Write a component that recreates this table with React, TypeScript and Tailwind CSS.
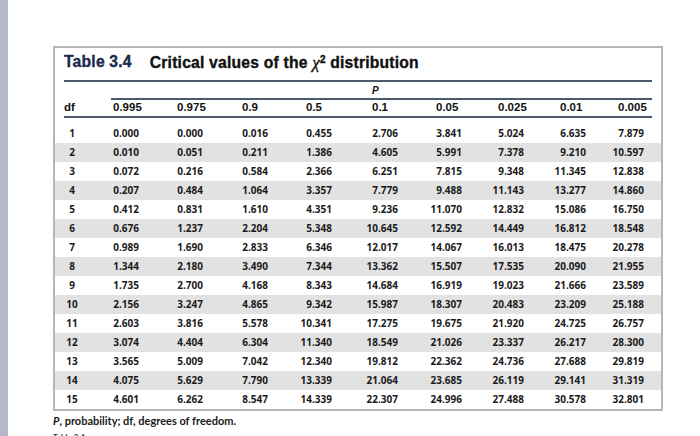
const columns = ['0.995', '0.975', '0.9', '0.5', '0.1', '0.05', '0.025', '0.01', '0.005'];

// cell widths, values sit on the right edge of each cell
const widths = [
  'w-[50px]',
  'w-[64px]',
  'w-[65px]',
  'w-[64px]',
  'w-[66px]',
  'w-[64px]',
  'w-[62px]',
  'w-[62px]',
  'w-[58px]',
];

const rows: string[][] = [
  ['0.000', '0.000', '0.016', '0.455', '2.706', '3.841', '5.024', '6.635', '7.879'],
  ['0.010', '0.051', '0.211', '1.386', '4.605', '5.991', '7.378', '9.210', '10.597'],
  ['0.072', '0.216', '0.584', '2.366', '6.251', '7.815', '9.348', '11.345', '12.838'],
  ['0.207', '0.484', '1.064', '3.357', '7.779', '9.488', '11.143', '13.277', '14.860'],
  ['0.412', '0.831', '1.610', '4.351', '9.236', '11.070', '12.832', '15.086', '16.750'],
  ['0.676', '1.237', '2.204', '5.348', '10.645', '12.592', '14.449', '16.812', '18.548'],
  ['0.989', '1.690', '2.833', '6.346', '12.017', '14.067', '16.013', '18.475', '20.278'],
  ['1.344', '2.180', '3.490', '7.344', '13.362', '15.507', '17.535', '20.090', '21.955'],
  ['1.735', '2.700', '4.168', '8.343', '14.684', '16.919', '19.023', '21.666', '23.589'],
  ['2.156', '3.247', '4.865', '9.342', '15.987', '18.307', '20.483', '23.209', '25.188'],
  ['2.603', '3.816', '5.578', '10.341', '17.275', '19.675', '21.920', '24.725', '26.757'],
  ['3.074', '4.404', '6.304', '11.340', '18.549', '21.026', '23.337', '26.217', '28.300'],
  ['3.565', '5.009', '7.042', '12.340', '19.812', '22.362', '24.736', '27.688', '29.819'],
  ['4.075', '5.629', '7.790', '13.339', '21.064', '23.685', '26.119', '29.141', '31.319'],
  ['4.601', '6.262', '8.547', '14.339', '22.307', '24.996', '27.488', '30.578', '32.801'],
];

const headFont = "font-['Liberation_Sans',Arial,sans-serif]";
const bodyFont = "font-['Open_Sans',sans-serif]";

export default function App() {
  return (
    <div className="w-[700px] h-[436px] overflow-hidden bg-white flex">
      <div className="w-[8px] shrink-0 bg-[#b5b8c6]" />

      <div className="pl-[45px] pt-[46px] flex flex-col">
        <div className="w-[610px] border-2 border-[#b3b7bc] flex flex-col">
          <div
            className={`${headFont} px-[9px] pt-[4px] h-[24px] flex items-center text-[15.7px] font-bold leading-none tracking-[0.2px] [-webkit-text-stroke:0.35px_currentColor]`}
          >
            <span className="text-[#1b2a4e]">Table 3.4</span>
            <span className="ml-[18px] text-[#111]">
              Critical values of the{' '}
              <span className="font-['Liberation_Serif',serif] italic font-normal text-[17px]">χ</span>
              <sup className="text-[10px]">2</sup> distribution
            </span>
          </div>

          <div className="mx-[9px] mt-[8px] h-[2px] bg-[#4c5a6b]" />

          <div className={`${headFont} h-[16px] flex items-center pl-[317px] text-[10px] font-bold italic text-[#111]`}>
            P
          </div>

          <div className="ml-[56px] mr-[9px] h-[2px] bg-[#4c5a6b]" />

          <div className={`${headFont} h-[16px] flex items-center text-[11.5px] font-bold text-[#111]`}>
            <div className="w-[34px] pl-[9px]">df</div>
            {columns.map((c, i) => (
              <div key={c} className={`${widths[i]} flex justify-end`}>
                <span className="w-[26px] whitespace-nowrap">{c}</span>
              </div>
            ))}
          </div>

          <div className="mx-[9px] h-[2px] bg-[#4c5a6b]" />

          <div className={`${bodyFont} mt-[6px] flex flex-col text-[10px] font-bold text-[#1a1a1a]`}>
            {rows.map((r, n) => (
              <div
                key={n}
                className={`h-[19px] shrink-0 flex items-center ${n % 2 === 1 ? 'bg-[#e2e2e2]' : 'bg-white'}`}
              >
                <div className="w-[34px] text-center">{n + 1}</div>
                {r.map((v, i) => (
                  <div key={i} className={`${widths[i]} text-right`}>
                    {v}
                  </div>
                ))}
              </div>
            ))}
          </div>
        </div>

        <div className="font-['Lato',sans-serif] mt-[2px] text-[11px] font-bold text-[#1a1a1a] leading-[16px]">
          <span className="italic">P</span>, probability; df, degrees of freedom.
        </div>
        <div className="font-['Lato',sans-serif] mt-[3px] text-[8px] font-bold text-[#333] leading-[10px]">
          Table 3.4
        </div>
      </div>
    </div>
  );
}
